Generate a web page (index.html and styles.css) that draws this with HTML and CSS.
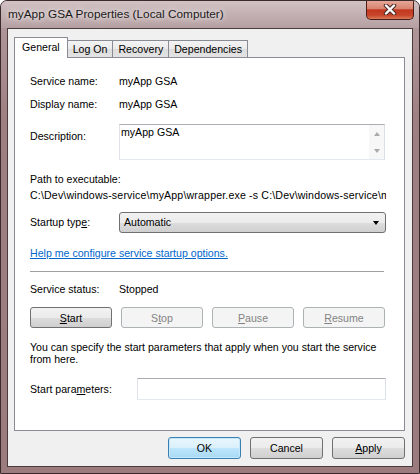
FILE: index.html
```html
<!DOCTYPE html>
<html lang="en">
<head>
    <meta charset="UTF-8">
    <title>myApp GSA Properties (Local Computer)</title>
    <link rel="stylesheet" href="styles.css">
</head>
<body>

<div class="window">
    <div class="titlebar">
        <span class="title">myApp GSA Properties (Local Computer)</span>
        <div class="close">
            <svg width="14" height="11" viewBox="0 0 14 11">
                <path d="M3 1.5 L11 9.5 M11 1.5 L3 9.5" stroke="#4a2a26" stroke-width="4.4" stroke-linecap="round"/>
                <path d="M3 1.5 L11 9.5 M11 1.5 L3 9.5" stroke="#fff" stroke-width="2.4" stroke-linecap="round"/>
            </svg>
        </div>
    </div>

    <div class="client">
        <div class="tabs">
            <div class="tab active">General</div>
            <div class="tab">Log On</div>
            <div class="tab">Recovery</div>
            <div class="tab">Dependencies</div>
        </div>

        <div class="panel">
            <div class="field">
                <span class="field-label">Service name:</span>
                <span>myApp GSA</span>
            </div>
            <div class="field display-row">
                <span class="field-label">Display name:</span>
                <span>myApp GSA</span>
            </div>
            <div class="field desc-row">
                <span class="field-label desc-label">Description:</span>
                <div class="desc-box">
                    <div class="desc-text">myApp GSA</div>
                    <div class="scrollbar">
                        <span class="arrow-up"></span>
                        <span class="arrow-down"></span>
                    </div>
                </div>
            </div>

            <div class="path-label">Path to executable:</div>
            <div class="path">C:\Dev\windows-service\myApp\wrapper.exe -s C:\Dev\windows-service\myApp\conf\wrapper.conf</div>

            <div class="field startup-row">
                <span class="field-label">Startup typ<u>e</u>:</span>
                <div class="select">
                    <span>Automatic</span>
                    <span class="arrow-down dark"></span>
                </div>
            </div>

            <a class="help-link" href="#">Help me configure service startup options.</a>

            <div class="divider"></div>

            <div class="field status-row">
                <span class="field-label">Service status:</span>
                <span>Stopped</span>
            </div>

            <div class="control-buttons">
                <button class="btn"><u>S</u>tart</button>
                <button class="btn" disabled>S<u>t</u>op</button>
                <button class="btn" disabled><u>P</u>ause</button>
                <button class="btn" disabled><u>R</u>esume</button>
            </div>

            <p class="note">You can specify the start parameters that apply when you start the service from here.</p>

            <div class="field params-row">
                <span class="field-label params-label">Start para<u>m</u>eters:</span>
                <div class="textbox"></div>
            </div>
        </div>

        <div class="actions">
            <button class="btn default">OK</button>
            <button class="btn">Cancel</button>
            <button class="btn"><u>A</u>pply</button>
        </div>
    </div>
</div>

</body>
</html>
```

FILE: styles.css
```css
body {
    margin: 0;
    background-color: #ffffff;
    font-family: "Liberation Sans", Arial, sans-serif;
    font-size: 10.6px;
    color: #000;
}
.window {
    width: 420px;
    height: 474px;
    box-sizing: border-box;
    border: 1px solid #3b2a2c;
    border-radius: 7px 7px 0 0;
    background: linear-gradient(#b39c9e, #9e7f82 120px, #9b7b7e);
    display: flex;
    flex-direction: column;
    overflow: hidden;
}
.titlebar {
    height: 27px;
    flex: none;
    display: flex;
    justify-content: space-between;
    align-items: flex-start;
    padding: 0 5px 0 7px;
    background: linear-gradient(#d1c2c4, #c0acae 60%, #b59fa2);
}
.title {
    line-height: 27px;
    font-size: 11.8px;
    color: #1a1a1a;
    text-shadow: 0 0 8px rgba(255, 255, 255, 0.9), 0 0 4px rgba(255, 255, 255, 0.8);
}
.close {
    width: 48px;
    height: 20px;
    margin-top: -1px;
    box-sizing: border-box;
    border: 1px solid #4a1d18;
    border-top: none;
    border-radius: 0 0 5px 5px;
    background: linear-gradient(#e7ab9b, #d98472 45%, #c2381f 52%, #c7442a 80%, #db7a58);
    display: flex;
    align-items: center;
    justify-content: center;
}
.client {
    flex: 1;
    margin: 0 6px 6px;
    border: 1px solid #4c3b3d;
    background-color: #f0f0f0;
    padding: 8px 7px 7px 6px;
    display: flex;
    flex-direction: column;
}
.tabs {
    display: flex;
    align-items: flex-end;
    height: 20px;
}
.tab {
    box-sizing: border-box;
    height: 17px;
    padding: 0 5px;
    margin-left: -1px;
    border: 1px solid #898c95;
    border-bottom: none;
    background: linear-gradient(#f3f3f3, #ebebeb 50%, #dddddd 51%, #e3e3e3);
    line-height: 16px;
}
.tab.active {
    height: 21px;
    margin-left: 0;
    margin-bottom: -1px;
    padding: 0 7px;
    position: relative;
    z-index: 1;
    background: #ffffff;
    line-height: 19px;
}
.panel {
    height: 374px;
    box-sizing: border-box;
    border: 1px solid #898c95;
    background-color: #ffffff;
    padding: 17px 18px 0 15px;
}
.field {
    display: flex;
    align-items: center;
    height: 13px;
    line-height: 13px;
}
.field-label {
    width: 89px;
    flex: none;
}
.display-row {
    margin-top: 10px;
}
.desc-row {
    margin-top: 13px;
    height: 36px;
    align-items: flex-start;
}
.desc-label {
    padding-top: 6px;
}
.desc-box {
    width: 266px;
    height: 36px;
    box-sizing: border-box;
    border: 1px solid;
    border-color: #abadb3 #dbdfe6 #e3e9ef #e2e3ea;
    display: flex;
}
.desc-text {
    flex: 1;
    padding: 1px 0 0 1px;
}
.scrollbar {
    width: 15px;
    box-sizing: border-box;
    background-color: #f7f7f7;
    display: flex;
    flex-direction: column;
    justify-content: space-between;
    align-items: center;
    padding: 7px 0 6px;
}
.arrow-up {
    width: 0;
    height: 0;
    border-left: 3.5px solid transparent;
    border-right: 3.5px solid transparent;
    border-bottom: 4px solid #a9a9a9;
}
.arrow-down {
    width: 0;
    height: 0;
    border-left: 3.5px solid transparent;
    border-right: 3.5px solid transparent;
    border-top: 4px solid #a9a9a9;
}
.arrow-down.dark {
    border-top-color: #000;
}
.path-label {
    margin-top: 13px;
    line-height: 13px;
}
.path {
    margin-top: 3px;
    line-height: 13px;
    letter-spacing: 0.16px;
    white-space: nowrap;
    overflow: hidden;
}
.startup-row {
    margin-top: 10px;
    height: 21px;
}
.select {
    width: 267px;
    height: 21px;
    box-sizing: border-box;
    border: 1px solid #707070;
    border-radius: 3px;
    background: linear-gradient(#f2f2f2, #ebebeb 50%, #dddddd 51%, #cfcfcf);
    display: flex;
    align-items: center;
    justify-content: space-between;
    padding: 0 6px 0 4px;
}
.help-link {
    display: block;
    width: max-content;
    margin-top: 14px;
    line-height: 13px;
    color: #0066cc;
}
.divider {
    width: 354px;
    margin-top: 11px;
    border-top: 1px solid #a0a0a0;
}
.status-row {
    margin-top: 11px;
}
.control-buttons {
    display: flex;
    gap: 9px;
    margin-top: 11px;
}
.control-buttons .btn {
    width: 82px;
    height: 21px;
}
.note {
    margin: 13px 0 0;
    line-height: 12px;
}
.params-row {
    margin-top: 13px;
    height: 22px;
}
.params-label {
    width: 107px;
}
.textbox {
    width: 249px;
    height: 22px;
    box-sizing: border-box;
    border: 1px solid;
    border-color: #abadb3 #dbdfe6 #e3e9ef #e2e3ea;
}
.actions {
    display: flex;
    justify-content: flex-end;
    gap: 9px;
    margin-top: 6px;
}
.btn {
    width: 73px;
    height: 22px;
    box-sizing: border-box;
    padding: 0;
    border: 1px solid #707070;
    border-radius: 3px;
    background: linear-gradient(#f2f2f2, #ebebeb 50%, #dddddd 51%, #cfcfcf);
    font: inherit;
    color: #000;
}
.btn.default {
    border-color: #3c7fb1;
    background: linear-gradient(#eaf6fd, #d9f0fc 50%, #bee6fd 51%, #a7d9f5);
    box-shadow: inset 0 0 0 1px #c4e8fb;
}
.btn:disabled {
    border-color: #adb2b5;
    background: #f4f4f4;
    color: #838383;
}
```
